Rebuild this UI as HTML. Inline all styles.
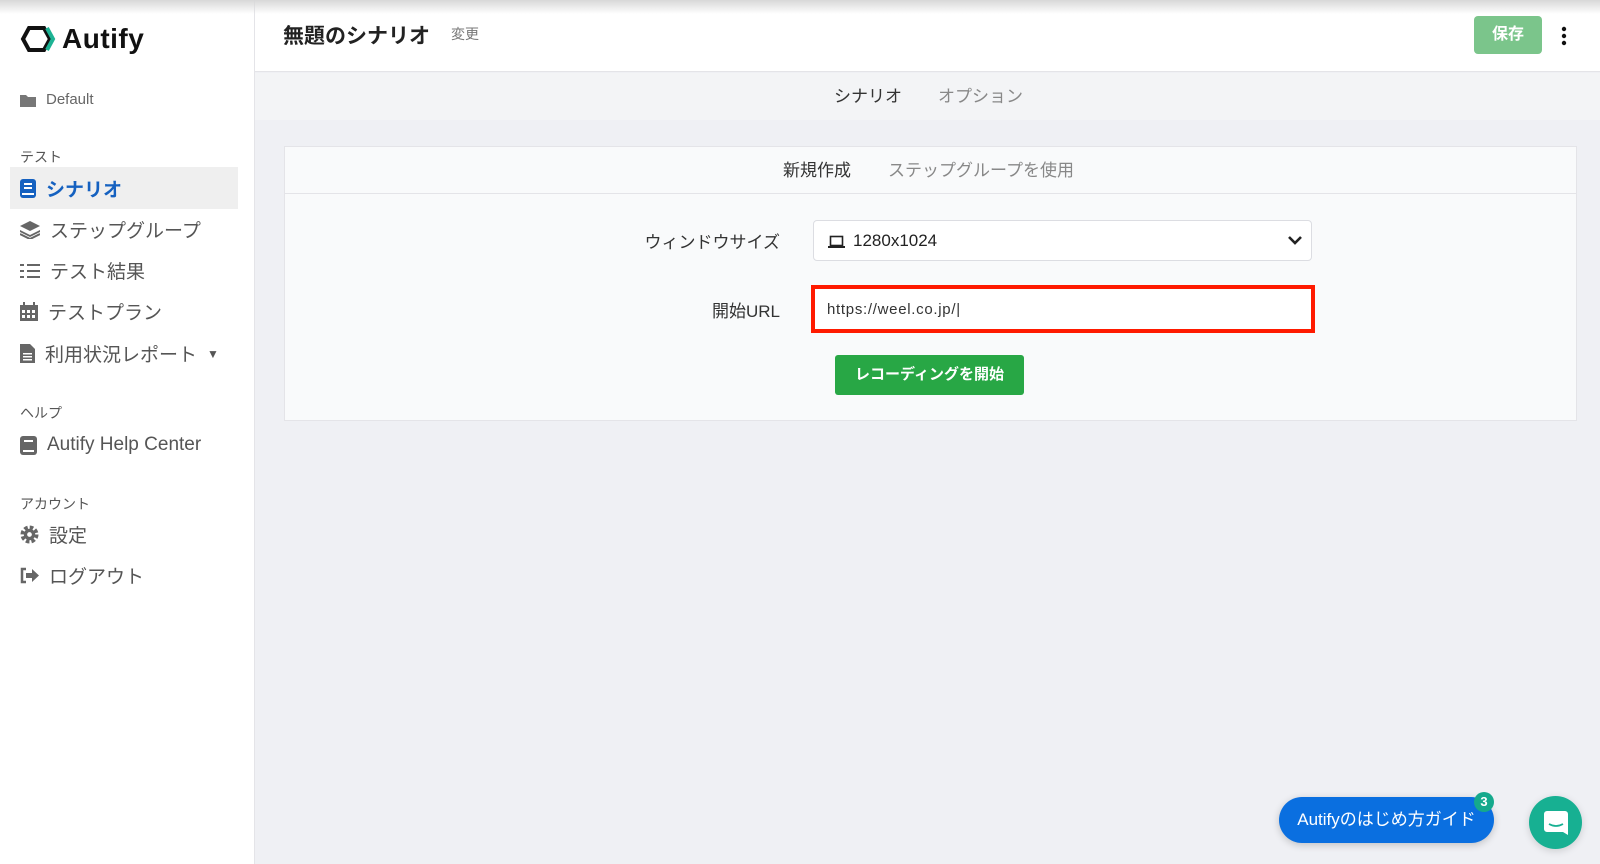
<!DOCTYPE html>
<html><head><meta charset="utf-8"><style>
*{box-sizing:border-box;margin:0;padding:0}
body{width:1600px;height:864px;overflow:hidden;background:#eff0f4;font-family:"Liberation Sans","Noto Sans CJK JP",sans-serif;position:relative;color:#333}
.abs{position:absolute}
.sb{left:0;top:0;width:255px;height:864px;background:#fff;border-right:1px solid #e4e4e8}
.nav{position:absolute;left:20px;font-size:19px;color:#555;display:flex;align-items:center;gap:10px}
.sec{position:absolute;left:20px;font-size:14px;color:#555}
.shadow{left:0;top:0;width:1600px;height:14px;background:linear-gradient(#d8d8d8,rgba(255,255,255,0));z-index:5}
</style></head><body>
<div class="abs sb">
  <svg class="abs" style="left:20px;top:26px" width="38" height="26" viewBox="0 0 38 26"><path d="M9 2H24L30 13L24 24H9L3 13Z" fill="none" stroke="#111" stroke-width="4"/><path d="M27 2L33 13L27 24" fill="none" stroke="#1db394" stroke-width="4"/></svg>
  <div class="abs" style="left:62px;top:23px;font-size:28px;font-weight:bold;color:#111;letter-spacing:0.5px">Autify</div>
  <div class="nav" style="top:91px;font-size:15px;color:#666"><svg width="16" height="14" viewBox="0 0 16 14"><path d="M0 2h6l2 2h8v10H0z" fill="#777"/></svg>Default</div>
  <div class="sec" style="top:147px">テスト</div>
  <div class="abs" style="left:10px;top:167px;width:228px;height:42px;background:#efefef"></div>
  <div class="nav" style="top:175px;color:#1561c0;font-weight:bold"><svg width="16" height="19" viewBox="0 0 16 19"><rect x="0" y="0" width="16" height="19" rx="3" fill="#1561c0"/><rect x="4" y="4" width="8" height="2" fill="#fff"/><rect x="4" y="8" width="8" height="2" fill="#fff"/><rect x="2" y="14" width="12" height="2" fill="#fff"/></svg>シナリオ</div>
  <div class="nav" style="top:216px"><svg width="20" height="18" viewBox="0 0 20 18"><path d="M10 0L20 5 10 10 0 5z M0 9l10 5 10-5v2l-10 5-10-5z" fill="#666"/><path d="M0 13l10 5 10-5" fill="none" stroke="#666" stroke-width="2"/></svg>ステップグループ</div>
  <div class="nav" style="top:257px"><svg width="20" height="18" viewBox="0 0 20 18"><g fill="#666"><rect x="7" y="2" width="13" height="2"/><rect x="7" y="8" width="13" height="2"/><rect x="7" y="14" width="13" height="2"/><rect x="0" y="2" width="4" height="2"/><rect x="0" y="8" width="4" height="2"/><rect x="0" y="14" width="4" height="2"/></g></svg>テスト結果</div>
  <div class="nav" style="top:298px"><svg width="18" height="19" viewBox="0 0 18 19"><rect x="0" y="3" width="18" height="16" fill="#666"/><rect x="3" y="0" width="2" height="4" fill="#666"/><rect x="13" y="0" width="2" height="4" fill="#666"/><g fill="#fff"><rect x="2" y="8" width="3" height="3"/><rect x="7" y="8" width="3" height="3"/><rect x="12" y="8" width="3" height="3"/><rect x="2" y="13" width="3" height="3"/><rect x="7" y="13" width="3" height="3"/><rect x="12" y="13" width="3" height="3"/></g></svg>テストプラン</div>
  <div class="nav" style="top:340px"><svg width="15" height="19" viewBox="0 0 15 19"><path d="M0 0h10l5 5v14H0z" fill="#666"/><g fill="#fff"><rect x="3" y="9" width="9" height="1.5"/><rect x="3" y="12" width="9" height="1.5"/><rect x="3" y="15" width="9" height="1.5"/></g></svg>利用状況レポート<span style="font-size:12px">▼</span></div>
  <div class="sec" style="top:403px">ヘルプ</div>
  <div class="nav" style="top:434px"><svg width="17" height="19" viewBox="0 0 17 19"><rect width="17" height="19" rx="3" fill="#666"/><rect x="4" y="4" width="9" height="2" fill="#fff"/><rect x="3" y="14" width="11" height="2" fill="#fff"/></svg>Autify Help Center</div>
  <div class="sec" style="top:494px">アカウント</div>
  <div class="nav" style="top:521px"><svg width="19" height="19" viewBox="0 0 20 20"><circle cx="10" cy="10" r="7" fill="none" stroke="#666" stroke-width="5" stroke-dasharray="3.5 2"/><circle cx="10" cy="10" r="6" fill="#666"/><circle cx="10" cy="10" r="2.5" fill="#fff"/></svg>設定</div>
  <div class="nav" style="top:562px"><svg width="19" height="17" viewBox="0 0 19 17"><path d="M6 2H2v13h4" fill="none" stroke="#666" stroke-width="2.5"/><path d="M6 6h6V2l7 6.5-7 6.5v-4H6z" fill="#666"/></svg>ログアウト</div>
</div>
<div class="abs" style="left:255px;top:0;width:1345px;height:72px;background:#fff;border-bottom:1px solid #e4e4e8"></div>
<div class="abs" style="left:283px;top:20px;font-size:21px;font-weight:bold;color:#222">無題のシナリオ</div>
<div class="abs" style="left:451px;top:24px;font-size:14px;color:#777">変更</div>
<div class="abs" style="left:1474px;top:16px;width:68px;height:38px;background:#7bc58b;border-radius:4px;color:#fff;font-weight:bold;font-size:16px;text-align:center;line-height:38px">保存</div>
<svg class="abs" style="left:1561px;top:26px" width="6" height="20" viewBox="0 0 6 20"><circle cx="3" cy="3" r="2.2" fill="#111"/><circle cx="3" cy="10" r="2.2" fill="#111"/><circle cx="3" cy="17" r="2.2" fill="#111"/></svg>
<div class="abs" style="left:255px;top:73px;width:1345px;height:47px;background:#f3f4f6"></div>
<div class="abs" style="left:834px;top:82px;font-size:17px;color:#333">シナリオ</div>
<div class="abs" style="left:938px;top:82px;font-size:17px;color:#888">オプション</div>
<div class="abs" style="left:284px;top:146px;width:1293px;height:275px;background:#f9fafb;border:1px solid #e4e4e8"></div>
<div class="abs" style="left:285px;top:193px;width:1291px;height:1px;background:#e4e4e8"></div>
<div class="abs" style="left:783px;top:156px;font-size:17px;color:#333">新規作成</div>
<div class="abs" style="left:888px;top:156px;font-size:17px;color:#888">ステップグループを使用</div>
<div class="abs" style="left:600px;top:228px;width:180px;text-align:right;font-size:17px;color:#333">ウィンドウサイズ</div>
<div class="abs" style="left:813px;top:220px;width:499px;height:41px;background:#fff;border:1px solid #dcdde2;border-radius:4px"></div>
<svg class="abs" style="left:828px;top:235px" width="17" height="14" viewBox="0 0 17 14"><rect x="2.5" y="1.5" width="12" height="9" fill="none" stroke="#222" stroke-width="1.6"/><rect x="0" y="11" width="17" height="2" fill="#222"/></svg>
<div class="abs" style="left:853px;top:231px;font-size:17px;color:#222">1280x1024</div>
<svg class="abs" style="left:1287px;top:235px" width="16" height="11" viewBox="0 0 16 11"><path d="M2 2l6 6 6-6" fill="none" stroke="#222" stroke-width="2.6"/></svg>
<div class="abs" style="left:600px;top:297px;width:180px;text-align:right;font-size:17px;color:#333">開始URL</div>
<div class="abs" style="left:811px;top:285px;width:504px;height:48px;background:#fff;border:4px solid #ff1a00"></div>
<div class="abs" style="left:827px;top:301px;font-size:15px;color:#333;letter-spacing:0.7px">https://weel.co.jp/<span style="font-weight:100">|</span></div>
<div class="abs" style="left:835px;top:355px;width:189px;height:40px;background:#28a745;border-radius:3px;color:#fff;font-weight:bold;font-size:15px;text-align:center;line-height:40px">レコーディングを開始</div>
<div class="abs" style="left:1279px;top:797px;width:215px;height:46px;background:#0a6fe0;border-radius:23px;color:#fff;font-size:17px;text-align:center;line-height:46px;box-shadow:0 2px 8px rgba(0,0,0,.2)">Autifyのはじめ方ガイド</div>
<div class="abs" style="left:1474px;top:792px;width:20px;height:20px;border-radius:10px;background:#15a98c;color:#fff;font-size:13px;font-weight:bold;text-align:center;line-height:20px">3</div>
<div class="abs" style="left:1529px;top:796px;width:53px;height:53px;border-radius:50%;background:#17b092;box-shadow:0 2px 8px rgba(0,0,0,.15)"></div>
<svg class="abs" style="left:1544px;top:811px" width="24" height="24" viewBox="0 0 24 24"><path d="M3 0h18a3 3 0 0 1 3 3v21l-5-3H3a3 3 0 0 1-3-3V3a3 3 0 0 1 3-3z" fill="#fff"/><path d="M5 13q7 4 14 0" fill="none" stroke="#17b092" stroke-width="1.8"/></svg>
<div class="abs shadow"></div>
</body></html>
